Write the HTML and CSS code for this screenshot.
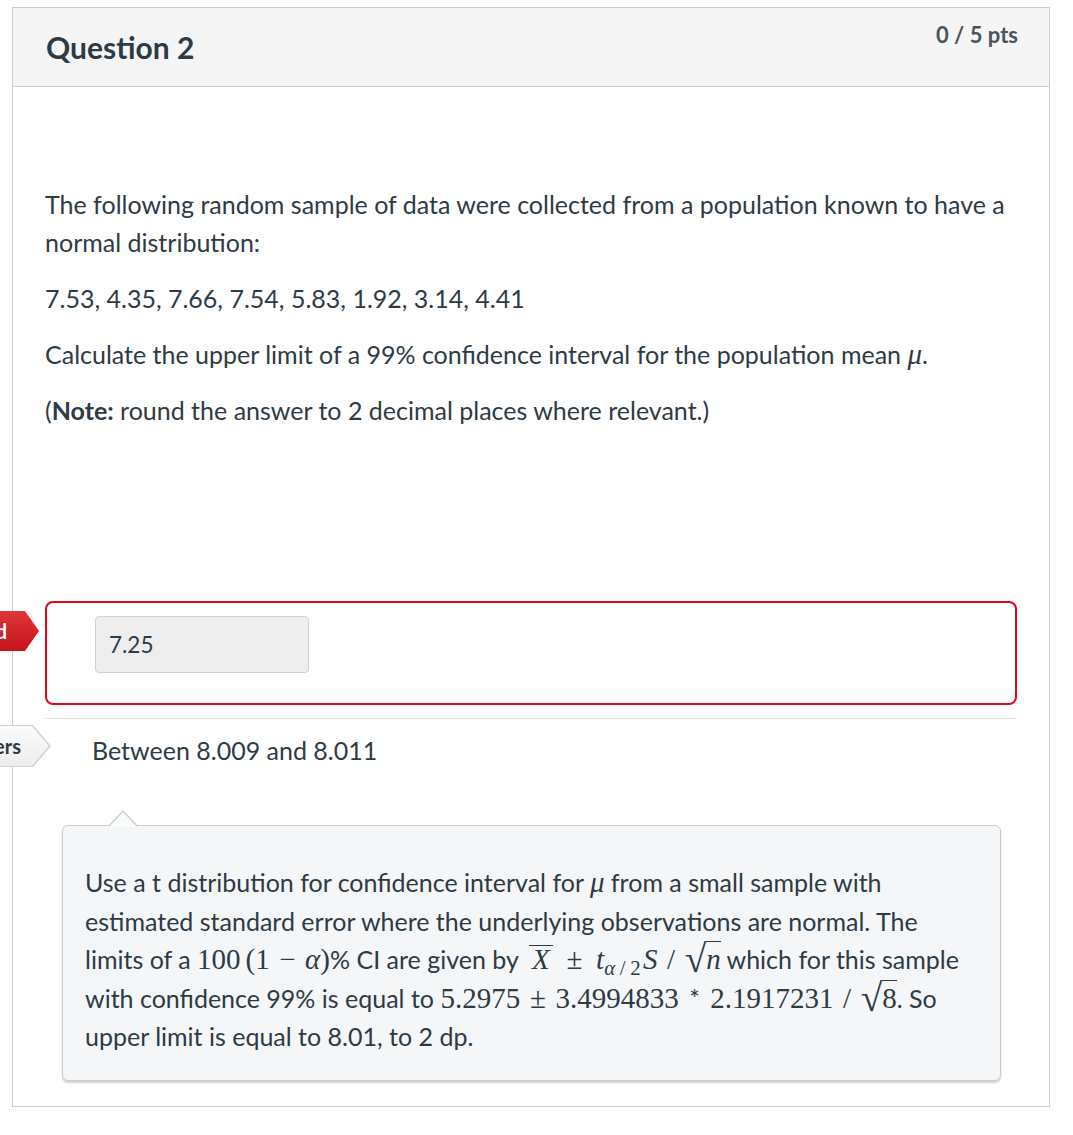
FILE: index.html
```html
<!DOCTYPE html>
<html>
<head>
<meta charset="utf-8">
<link rel="stylesheet" href="styles.css">
</head>
<body>
<div class="page">
  <div class="card">
    <div class="header">
      <h2 class="title">Question 2</h2>
      <div class="pts">0 / 5 pts</div>
    </div>
    <div class="body">
      <div class="question">
        <p>The following random sample of data were collected from a population known to have a normal distribution:</p>
        <p>7.53, 4.35, 7.66, 7.54, 5.83, 1.92, 3.14, 4.41</p>
        <p>Calculate the upper limit of a 99% confidence interval for the population mean <span class="m mi">μ</span>.</p>
        <p>(<b>Note:</b> round the answer to 2 decimal places where relevant.)</p>
      </div>

      <div class="answer-wrap">
        <div class="flag flag-red"><span>You Answered</span></div>
        <div class="answer-box">
          <div class="input">7.25</div>
        </div>
      </div>

      <div class="correct-row">
        <div class="flag flag-gray"><span>Correct Answers</span></div>
        <div class="correct-text">Between 8.009 and 8.011</div>
      </div>

      <div class="feedback">
        <p>Use a t distribution for confidence interval for <span class="m mi">μ</span> from a small sample with estimated standard error where the underlying observations are normal. The limits of a <span class="m">100<span class="thin"></span>(1<span class="bin">−</span><span class="mi">α</span>)</span>% CI are given by <span class="m"><span class="mi ov">X</span><span class="bin pm">±</span><span class="mi">t</span><sub class="sub"><span class="mi">α</span><span class="sl">/</span>2</sub><span class="mi s">S</span><span class="slash">/</span><span class="sqrt"><span class="surd">√</span><span class="rad mi">n</span></span></span> which for this sample with confidence 99% is equal to <span class="m">5.2975<span class="bin">±</span>3.4994833<span class="bin ast">*</span>2.1917231<span class="slash">/</span><span class="sqrt"><span class="surd">√</span><span class="rad">8</span></span></span>. So upper limit is equal to 8.01, to 2 dp.</p>
      </div>
    </div>
  </div>
</div>
</body>
</html>
```

FILE: styles.css
```css
* { box-sizing: border-box; }
html, body { margin: 0; padding: 0; background: #ffffff; }
body {
  font-family: Lato, "Open Sans", sans-serif;
  color: #2d3b45;
}
.page {
  padding: 7px 23px 0 12px;
  height: 1135px;
  overflow: hidden;
}
.card {
  border: 1px solid #c7cdd1;
  position: relative;
}
.header {
  background: #f5f5f5;
  border-bottom: 1px solid #c7cdd1;
  height: 79px;
  display: flex;
  justify-content: space-between;
  align-items: flex-start;
  padding: 0 31px 0 33px;
}
.title {
  margin: 0;
  padding-top: 21px;
  font-size: 30px;
  font-weight: 700;
  line-height: 36px;
}
.pts {
  padding-top: 12px;
  font-size: 22px;
  font-weight: 700;
  line-height: 30px;
  color: #49545c;
}
.body {
  padding: 98px 32px 25px 32px;
}
.question p {
  margin: 0 0 18px 0;
  font-size: 25px;
  line-height: 38px;
}
.question p:last-child { margin-bottom: 0; }

.m {
  font-family: "Liberation Serif", "DejaVu Serif", serif;
  font-size: 1.16em;
  line-height: 1;
}
.mi { font-style: italic; }
.m .m { font-size: 1em; }
.thin { display: inline-block; width: 0.17em; }
.bin {
  display: inline-block;
  width: 0.778em;
  margin: 0 0.222em;
  text-align: center;
}
.pm { margin: 0 0.36em 0 0.36em; }
.ast {
  width: 0.7em;
  font-family: Lato, sans-serif;
  font-size: 0.86em;
  margin: 0 0.28em;
}
.slash {
  display: inline-block;
  width: 0.5em;
  margin: 0 0.22em;
  text-align: center;
}
.sl {
  display: inline-block;
  width: 0.72em;
  text-align: center;
}
.s { margin-left: 0.08em; }

.answer-wrap {
  position: relative;
  margin-top: 172px;
}
.answer-box {
  border: 2px solid #e0061f;
  border-radius: 8px;
  height: 104px;
  padding: 13px 48px;
}
.input {
  width: 214px;
  height: 57px;
  background: #eeeeee;
  border: 1px solid #cfd3d6;
  border-radius: 4px;
  font-size: 22.5px;
  line-height: 55px;
  padding-left: 13px;
  color: #2d3b45;
}
.flag {
  position: absolute;
  left: -45px;
  font-weight: 700;
  white-space: nowrap;
  overflow: hidden;
}
.flag span {
  position: absolute;
  top: 0;
  bottom: 0;
  display: flex;
  align-items: center;
}
.flag-red {
  top: 10px;
  width: 39px;
  height: 40px;
  background: linear-gradient(#de3636, #c4141d);
  color: #ffffff;
  font-size: 20px;
  clip-path: polygon(0 0, 25px 0, 39px 20px, 25px 40px, 0 40px);
}
.flag-red span { right: 32px; }
.flag-gray {
  top: 6px;
  width: 51px;
  height: 42px;
  background: #cdd1d4;
  color: #2d3b45;
  font-size: 20px;
  clip-path: polygon(0 0, 33px 0, 51px 21px, 33px 42px, 0 42px);
}
.flag-gray::before {
  content: "";
  position: absolute;
  left: 0;
  top: 1px;
  width: 49px;
  height: 40px;
  background: linear-gradient(#fbfbfb, #ededed);
  clip-path: polygon(0 0, 32px 0, 49px 20px, 32px 40px, 0 40px);
}
.flag-gray span { right: 30px; }
.correct-row {
  position: relative;
  margin-top: 13px;
  border-top: 1px solid #e2e5e7;
  height: 62px;
  display: flex;
  align-items: center;
  padding-left: 47px;
}
.correct-text {
  font-size: 25px;
  padding-top: 1px;
}
.feedback {
  position: relative;
  margin: 45px 16px 0 17px;
  background: #f5f6f7;
  border: 1px solid #c7cdd1;
  border-radius: 6px;
  box-shadow: 0 2px 2px rgba(0,0,0,0.18);
  padding: 37px 22px 24px 22px;
}
.feedback::before,
.feedback::after {
  content: "";
  position: absolute;
  width: 0;
  height: 0;
  border-style: solid;
  border-color: transparent;
}
.feedback::before {
  top: -16px;
  left: 45px;
  border-width: 0 15px 16px 15px;
  border-bottom-color: #c7cdd1;
}
.feedback::after {
  top: -14px;
  left: 46px;
  border-width: 0 14px 15px 14px;
  border-bottom-color: #fafbfb;
}
.feedback p {
  margin: 0;
  font-size: 25px;
  line-height: 38.5px;
}
.ov {
  display: inline-block;
  border-top: 1.5px solid #2d3b45;
  line-height: 0.95;
  padding: 0 3px;
  margin-left: 0.15em;
}
.sub {
  font-size: 0.72em;
  vertical-align: -0.3em;
  line-height: 0;
}
.sqrt { white-space: nowrap; }
.surd {
  display: inline-block;
  font-size: 1.35em;
  line-height: 0.8;
  vertical-align: -0.08em;
}
.rad {
  border-top: 1.5px solid #2d3b45;
  padding-top: 1px;
}
```
